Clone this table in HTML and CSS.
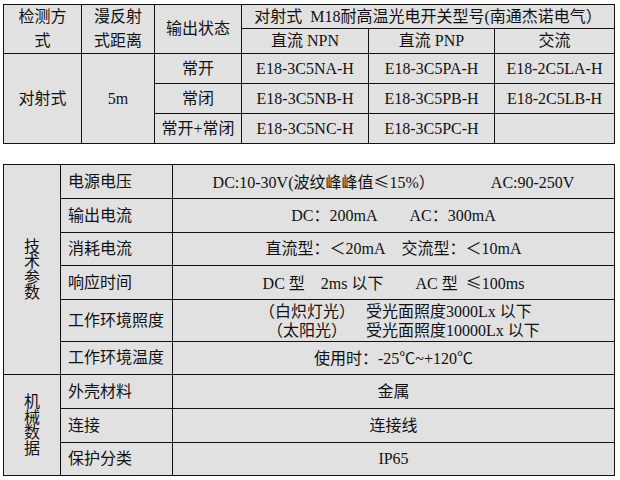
FILE: index.html
```html
<!DOCTYPE html>
<html lang="zh-CN">
<head>
<meta charset="utf-8">
<title>M18耐高温光电开关</title>
<link rel="stylesheet" href="styles.css">
</head>
<body>
<div class="page">
<table class="t1">
<colgroup><col class="c1"><col class="c2"><col class="c3"><col class="c4"><col class="c5"><col class="c6"></colgroup>
<tr class="h1"><th rowspan="2" class="two">检测方<br>式</th><th rowspan="2" class="two">漫反射<br>式距离</th><th rowspan="2">输出状态</th><th colspan="3">对射式&ensp;M18耐高温光电开关型号(南通杰诺电气）</th></tr>
<tr class="h2"><th>直流 NPN</th><th>直流 PNP</th><th>交流</th></tr>
<tr class="r"><td rowspan="3">对射式</td><td rowspan="3">5m</td><td>常开</td><td>E18-3C5NA-H</td><td>E18-3C5PA-H</td><td>E18-2C5LA-H</td></tr>
<tr class="r"><td>常闭</td><td>E18-3C5NB-H</td><td>E18-3C5PB-H</td><td>E18-2C5LB-H</td></tr>
<tr class="r"><td>常开+常闭</td><td>E18-3C5NC-H</td><td>E18-3C5PC-H</td><td></td></tr>
</table>

<table class="t2">
<colgroup><col class="d1"><col class="d2"><col class="d3"></colgroup>
<tr class="ra"><td rowspan="6" class="vert">技<br>术<br>参<br>数</td><td class="k">电源电压</td><td class="v">DC:10-30V(波纹峰峰值<span class="cjk">≤</span>15%）&ensp;&ensp;&ensp;&ensp;&ensp;&ensp;&ensp;AC:90-250V</td></tr>
<tr class="ra"><td class="k">输出电流</td><td class="v">DC：200mA&ensp;&ensp;&ensp;&ensp;AC：300mA</td></tr>
<tr class="rb"><td class="k">消耗电流</td><td class="v">直流型：＜20mA&ensp;&ensp;交流型：＜10mA</td></tr>
<tr class="ra"><td class="k">响应时间</td><td class="v">DC 型&ensp;&ensp;2ms 以下&ensp;&ensp;&ensp;&ensp;AC 型&ensp;<span class="cjk">≤</span>100ms</td></tr>
<tr class="rc"><td class="k">工作环境照度</td><td class="v"><div class="lux"><span class="lk">（白炽灯光）</span><span>受光面照度3000Lx 以下</span><span class="lk">（太阳光）</span><span>受光面照度10000Lx 以下</span></div></td></tr>
<tr class="rb"><td class="k">工作环境温度</td><td class="v">使用时：-25<span class="cjk">℃</span>~+120<span class="cjk">℃</span></td></tr>
<tr class="ra"><td rowspan="3" class="vert">机<br>械<br>数<br>据</td><td class="k">外壳材料</td><td class="v">金属</td></tr>
<tr class="ra"><td class="k">连接</td><td class="v">连接线</td></tr>
<tr class="rb"><td class="k">保护分类</td><td class="v">IP65</td></tr>
</table>
</div>
</body>
</html>
```

FILE: styles.css
```css
html, body {
  margin: 0;
  background: #ffffff;
}
body {
  font-family: "Liberation Serif", "Noto Sans CJK SC", serif;
  font-size: 16px;
  color: #111111;
}
.page {
  padding: 4px 0 0 3px;
}
table {
  border-collapse: collapse;
  table-layout: fixed;
  background: #e1e1e1;
}
th, td {
  border: 1px solid #111111;
  padding: 0;
  font-weight: normal;
  text-align: center;
  vertical-align: middle;
  line-height: 20px;
  white-space: nowrap;
}
.cjk {
  font-family: "Noto Sans CJK SC", sans-serif;
}
.t1 { width: 612px; }
.c1 { width: 78px; }
.c2 { width: 73px; }
.c3 { width: 87px; }
.c4 { width: 127px; }
.c5 { width: 126px; }
.c6 { width: 120px; }
.h1 { height: 24px; }
.h2 { height: 25px; }
.r { height: 30px; }
.two { line-height: 24px; }

.t2 {
  width: 612px;
  margin-top: 20px;
}
.d1 { width: 57px; }
.d2 { width: 112px; }
.d3 { width: 442px; }
.ra { height: 34px; }
.rb { height: 33px; }
.rc { height: 42px; }
.k {
  text-align: left;
  padding-left: 7px;
}
.v {
  white-space: pre;
}
.vert {
  line-height: 15.5px;
}
.lux {
  display: grid;
  grid-template-columns: 96px auto;
  column-gap: 11px;
  justify-content: start;
  padding-left: 86px;
  text-align: left;
  line-height: 19px;
}
.lk {
  text-align: center;
}
```
